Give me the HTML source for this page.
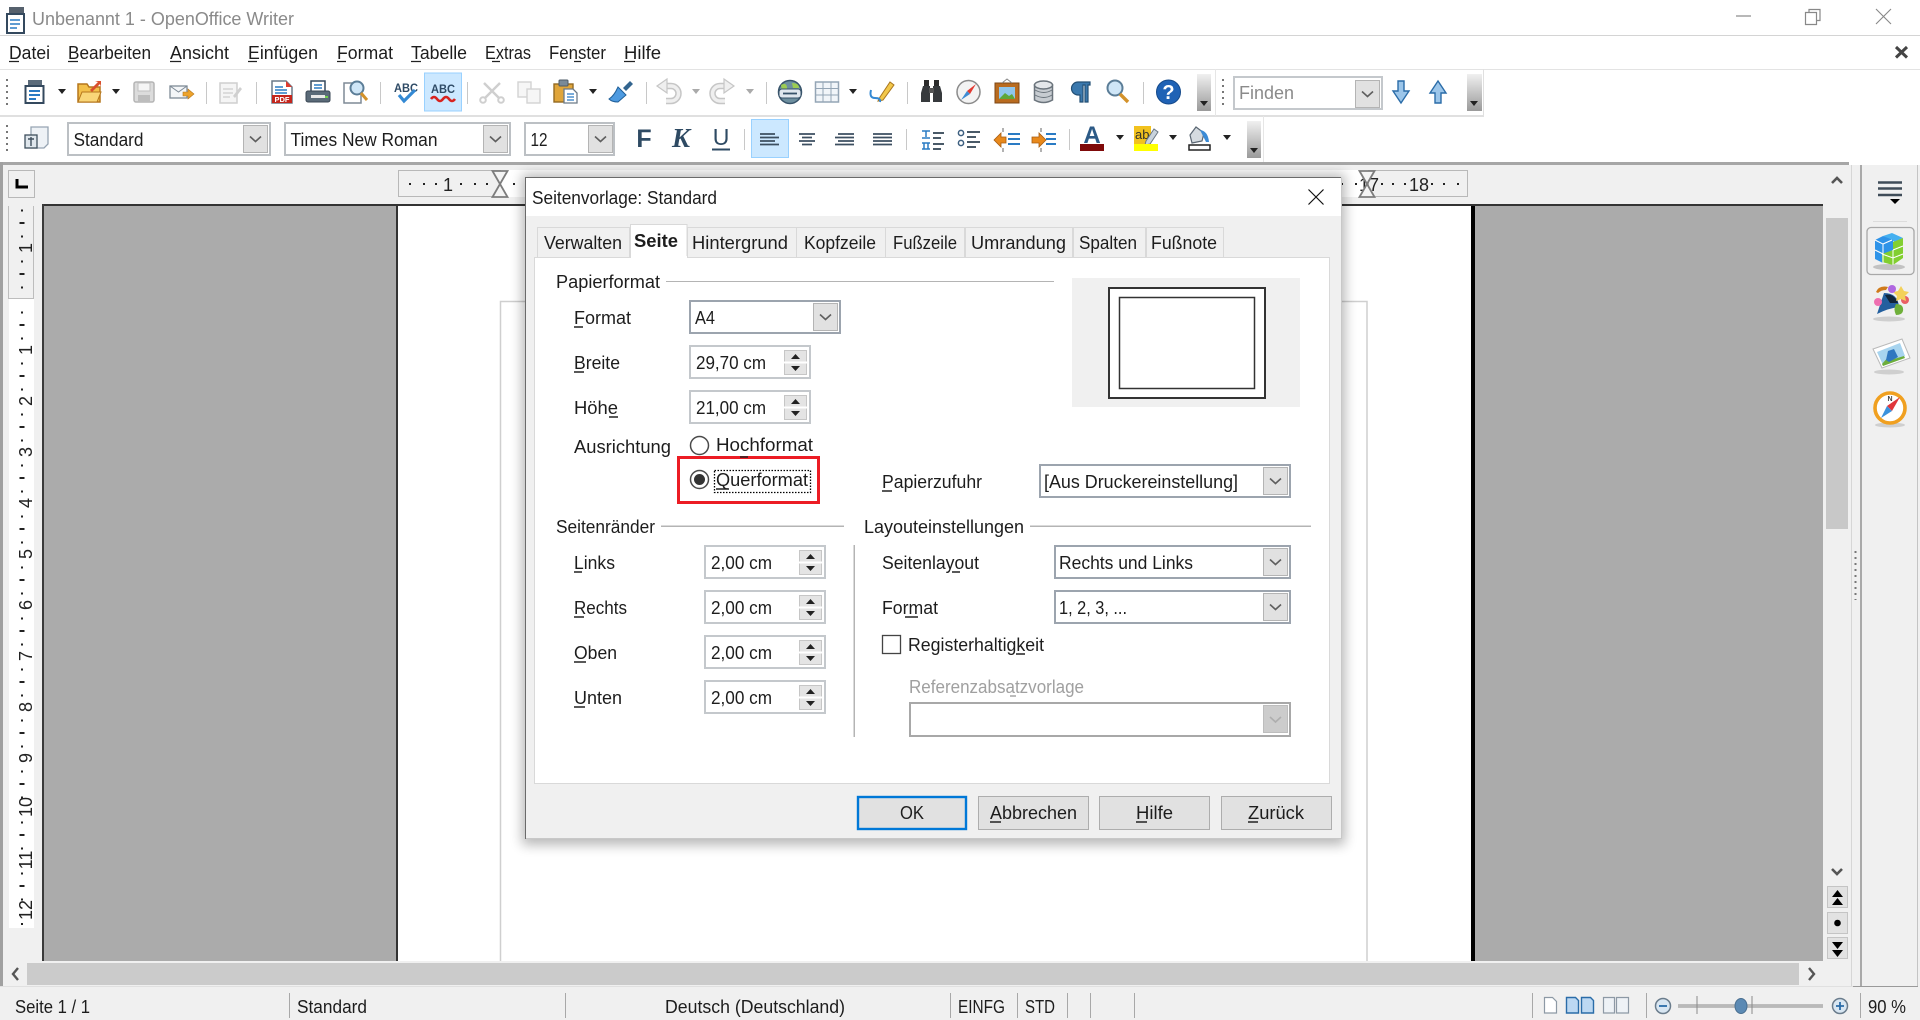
<!DOCTYPE html>
<html lang="de">
<head>
<meta charset="utf-8">
<title>Unbenannt 1 - OpenOffice Writer</title>
<style>
html,body{margin:0;padding:0;background:#fff;width:1920px;height:1020px;overflow:hidden}
svg{display:block;position:absolute;left:0;top:0;filter:blur(.35px)}
text{font-family:"Liberation Sans",sans-serif;font-size:18px;fill:#1d1d1d;white-space:pre}
.g{fill:#8a8a8a}
.d{fill:#a0a0a0}
.r{font-size:18px;fill:#222}
</style>
</head>
<body>
<svg xmlns="http://www.w3.org/2000/svg" width="1920" height="1020" viewBox="0 0 1920 1020">
<defs>
<g id="cb"><rect x=".5" y=".5" width="24" height="27" fill="#e1e1e1" stroke="#b4b4b4"/><path d="M7 11.500l5.500 5 5.500-5" stroke="#5f5f5f" stroke-width="1.600" fill="none"/></g>
<g id="sp"><rect x=".5" y=".5" width="22" height="24" fill="#e4e4e4" stroke="#c6c6c6"/><path d="M0 12.500h23" stroke="#fff" stroke-width="2"/><path d="M7 9l4.500-5 4.500 5z M7 16l4.500 5 4.500-5z" fill="#222"/></g>
<g id="vt"><rect x="21" y="12.500" width="2" height="2" fill="#222"/><rect x="19.500" y="25" width="5" height="2" fill="#222"/><rect x="21" y="38.500" width="2" height="2" fill="#222"/></g>
<path id="ar" d="M-4 0h8l-4 5z" fill="#222"/>
<path id="arg" d="M-4 0h8l-4 5z" fill="#aaa"/>
<g id="grip"><rect x="0" y="0" width="2" height="2" fill="#777"/><rect x="0" y="6" width="2" height="2" fill="#777"/><rect x="0" y="12" width="2" height="2" fill="#777"/><rect x="0" y="18" width="2" height="2" fill="#777"/><rect x="0" y="24" width="2" height="2" fill="#777"/></g>
<linearGradient id="ov" x1="0" y1="0" x2="0" y2="1"><stop offset="0" stop-color="#f0f0f0"/><stop offset="1" stop-color="#9a9a9a"/></linearGradient>
<filter id="sh" x="-5%" y="-5%" width="110%" height="110%"><feGaussianBlur stdDeviation="6"/></filter>
</defs>

<!-- Base -->
<rect width="1920" height="1020" fill="#fff"/>
<rect x="0" y="35" width="1920" height="1" fill="#d4d4d4"/>
<rect x="0" y="69" width="1920" height="1" fill="#e3e3e3"/>
<rect x="0" y="115" width="1484" height="2" fill="#e0e0e0"/>
<rect x="1483" y="69" width="1" height="47" fill="#e0e0e0"/>
<rect x="1215" y="69" width="1" height="47" fill="#e6e6e6"/>
<rect x="1263" y="116" width="1" height="46" fill="#e6e6e6"/>
<rect x="0" y="162" width="1849" height="3" fill="#a6a6a6"/>
<rect x="0" y="165" width="1920" height="855" fill="#f0f0f0"/>
<rect x="0" y="162" width="3" height="825" fill="#a0a0a0"/>

<!-- Title bar -->
<g>
<rect x="9" y="7" width="15" height="8" fill="#56616d"/>
<path d="M7 14h17v19H7z" fill="#fff" stroke="#34495e" stroke-width="2"/>
<path d="M10 20h10M10 24h10M10 28h7" stroke="#2a7bc4" stroke-width="1.600"/>
<text class="g" x="32" y="25" textLength="262" lengthAdjust="spacingAndGlyphs">Unbenannt 1 - OpenOffice Writer</text>
<path d="M1736 16h15" stroke="#888" stroke-width="1.200"/>
<path d="M1805.500 12.500h11v12h-11zM1809 12V9.500h11v11h-3.500" stroke="#888" stroke-width="1.200" fill="none"/>
<path d="M1876 9l15 15M1891 9l-15 15" stroke="#888" stroke-width="1.100"/>
</g>

<!-- Menu -->
<g>
<text x="9" y="59" textLength="41" lengthAdjust="spacingAndGlyphs">Datei</text>
<text x="68" y="59" textLength="83" lengthAdjust="spacingAndGlyphs">Bearbeiten</text>
<text x="170" y="59" textLength="59" lengthAdjust="spacingAndGlyphs">Ansicht</text>
<text x="248" y="59" textLength="70" lengthAdjust="spacingAndGlyphs">Einfügen</text>
<text x="337" y="59" textLength="56" lengthAdjust="spacingAndGlyphs">Format</text>
<text x="411" y="59" textLength="56" lengthAdjust="spacingAndGlyphs">Tabelle</text>
<text x="485" y="59" textLength="46" lengthAdjust="spacingAndGlyphs">Extras</text>
<text x="549" y="59" textLength="57" lengthAdjust="spacingAndGlyphs">Fenster</text>
<text x="624" y="59" textLength="37" lengthAdjust="spacingAndGlyphs">Hilfe</text>
<path d="M9 61.500h10M68 61.500h10M170 61.500h11M248 61.500h9M337 61.500h9M411 61.500h10M492 61.500h8M574 61.500h7M624 61.500h11" stroke="#222" stroke-width="1.300"/>
<path d="M1896 47l11 10.500M1907 47l-11 10.500" stroke="#444" stroke-width="3"/>
</g>

<!-- Toolbar 1 -->
<use href="#grip" x="6" y="79"/>
<g>
<!-- new -->
<rect x="28" y="80" width="14" height="6" fill="#5b6b7a"/>
<path d="M25.500 86h18v17h-18z" fill="#fff" stroke="#34495e" stroke-width="2"/>
<path d="M29 91h11M29 95h11M29 99h7" stroke="#2a7bc4" stroke-width="2"/>
<use href="#ar" x="62" y="89"/>
<!-- open -->
<path d="M78 102V84h9l2 3h11v15z" fill="#f3c04a" stroke="#b5761c" stroke-width="1.500"/>
<path d="M78 102l4-10h19l-4 10z" fill="#f9d678" stroke="#b5761c"/>
<path d="M90 90l8-8-3-1h6v6l-1-3-8 8z" fill="#d9502e"/>
<use href="#ar" x="116" y="89"/>
<!-- save -->
<rect x="134" y="82" width="20" height="20" rx="2" fill="#dcdcdc" stroke="#b5b5b5" stroke-width="1.500"/>
<rect x="138" y="83" width="12" height="8" fill="#f5f5f5" stroke="#c0c0c0"/>
<rect x="138" y="95" width="12" height="7" fill="#bdbdbd"/>
<!-- mail -->
<rect x="170" y="86" width="17" height="12" fill="#f4f6f8" stroke="#7e8a96" stroke-width="1.300"/>
<path d="M170 86l8.500 6 8.500-6" fill="none" stroke="#7e8a96"/>
<path d="M183 92h5v-3l6 5-6 5v-3h-5z" fill="#eda32c" stroke="#b5761c" stroke-width=".6"/>
<rect x="206" y="82" width="1" height="22" fill="#c8c8c8"/>
<!-- edit doc disabled -->
<rect x="220" y="83" width="17" height="20" fill="#f5f5f5" stroke="#cfcfcf" stroke-width="1.500"/>
<path d="M223 89h10M223 93h10M223 97h7" stroke="#d4d4d4" stroke-width="1.500"/>
<path d="M233 96l7-9 2 2-7 9z" fill="#d0d0d0"/>
<rect x="256" y="82" width="1" height="22" fill="#c8c8c8"/>
<!-- pdf -->
<path d="M272 81h14l6 6v16h-20z" fill="#fff" stroke="#6c7a88" stroke-width="1.500"/>
<path d="M286 81l6 6h-6z" fill="#e03b2f"/>
<path d="M275 87h8M275 90h12M275 93h12" stroke="#2a7bc4" stroke-width="1.600"/>
<rect x="272" y="95" width="20" height="8" fill="#c4261d"/>
<text x="282" y="102" text-anchor="middle" style="font-size:7.500px;font-weight:bold;fill:#fff">PDF</text>
<!-- print -->
<rect x="311" y="81" width="14" height="12" fill="#fff" stroke="#34495e" stroke-width="1.500"/>
<path d="M314 85h8M314 88h8" stroke="#2a7bc4" stroke-width="1.500"/>
<rect x="306" y="91" width="24" height="11" rx="2" fill="#5a6a78" stroke="#3a4754"/>
<rect x="311" y="95" width="14" height="3" fill="#e8e8e8"/>
<rect x="325" y="96" width="3" height="2" fill="#6fd04a"/>
<!-- preview -->
<path d="M344 83h12l5 5v15h-17z" fill="#fff" stroke="#7e8a96" stroke-width="1.500"/>
<circle cx="357" cy="88" r="6.500" fill="#cfe6f7" stroke="#5b7d97" stroke-width="2"/>
<path d="M361 93l6 7" stroke="#d3922a" stroke-width="3"/>
<rect x="380" y="82" width="1" height="22" fill="#c8c8c8"/>
<!-- spell -->
<text x="406" y="92" text-anchor="middle" style="font-size:11.500px;font-weight:bold;fill:#2f4b66" textLength="24" lengthAdjust="spacingAndGlyphs">ABC</text>
<path d="M399 95l5 6 11-11" fill="none" stroke="#3389d4" stroke-width="3.200"/>
<!-- autospell -->
<rect x="424.500" y="73" width="37" height="38" fill="#cce8ff" stroke="#99d1ff"/>
<text x="443" y="93" text-anchor="middle" style="font-size:11.500px;font-weight:bold;fill:#2f4b66" textLength="24" lengthAdjust="spacingAndGlyphs">ABC</text>
<path d="M431 99q3-4 6 0t6 0 6 0 6 0" fill="none" stroke="#d8231f" stroke-width="2.600"/>
<rect x="467" y="82" width="1" height="22" fill="#c8c8c8"/>
<!-- cut -->
<path d="M484 83l15 15M500 83l-15 15" stroke="#cfcfcf" stroke-width="2.400"/>
<circle cx="483" cy="100" r="2.800" fill="none" stroke="#cfcfcf" stroke-width="2"/>
<circle cx="501" cy="100" r="2.800" fill="none" stroke="#cfcfcf" stroke-width="2"/>
<!-- copy -->
<rect x="518" y="82" width="13" height="15" fill="#f6f6f6" stroke="#d3d3d3" stroke-width="1.400"/>
<rect x="527" y="89" width="13" height="14" fill="#f6f6f6" stroke="#d3d3d3" stroke-width="1.400"/>
<!-- paste -->
<rect x="554" y="84" width="19" height="18" fill="#e0a53a" stroke="#946a22" stroke-width="1.400"/>
<rect x="559" y="80" width="9" height="6" rx="1" fill="#7a8a98" stroke="#4e5b67"/>
<path d="M564 89h9l4 4v10h-13z" fill="#fff" stroke="#6c7a88" stroke-width="1.300"/>
<path d="M567 94h7M567 97h7M567 100h7" stroke="#2a7bc4" stroke-width="1.300"/>
<use href="#ar" x="593" y="89"/>
<!-- brush -->
<path d="M623 88l7-7 3 3-7 7z" fill="#33658f"/>
<path d="M618 87l8 8-8 7q-6 0-9-3 5-3 9-12z" fill="#4d9ae0" stroke="#1f5f99"/>
<rect x="646" y="82" width="1" height="22" fill="#c8c8c8"/>
<!-- undo / redo -->
<path d="M665 86h6a7.500 7.500 0 0 1 0 15h-5" fill="none" stroke="#c6c6c6" stroke-width="6.500"/>
<path d="M665 86h6a7.500 7.500 0 0 1 0 15h-5" fill="none" stroke="#efefef" stroke-width="3.500"/>
<path d="M667 79l-10 7 10 7z" fill="#efefef" stroke="#c6c6c6" stroke-width="1.200"/>
<use href="#arg" x="696" y="89"/>
<path d="M726 86h-6a7.500 7.500 0 0 0 0 15h5" fill="none" stroke="#c6c6c6" stroke-width="6.500"/>
<path d="M726 86h-6a7.500 7.500 0 0 0 0 15h5" fill="none" stroke="#efefef" stroke-width="3.500"/>
<path d="M724 79l10 7-10 7z" fill="#efefef" stroke="#c6c6c6" stroke-width="1.200"/>
<use href="#arg" x="750" y="89"/>
<rect x="766" y="82" width="1" height="22" fill="#c8c8c8"/>
<!-- globe -->
<circle cx="790" cy="92" r="11.500" fill="#6d8f9f" stroke="#37536a" stroke-width="1.500"/>
<path d="M781 85q5-3 6 2t-5 4zM792 83q7 0 7 5l-6 0z" fill="#9ccc52"/>
<rect x="779" y="89" width="22" height="9" rx="3" fill="#dfe7ee" stroke="#37536a"/>
<path d="M783 93.500h14" stroke="#37536a" stroke-width="1.800"/>
<!-- table -->
<rect x="815.500" y="82" width="23" height="20" fill="#f1f5f9" stroke="#94a5b5" stroke-width="1.500"/>
<path d="M815 88.500h24M815 95h24M823 82v20M831 82v20" stroke="#94a5b5"/>
<use href="#ar" x="853" y="89"/>
<!-- pencil -->
<path d="M880 97l10-15 4 3-11 15-5 1z" fill="#f2c74a" stroke="#a9761f"/>
<path d="M871 90q-2 8 4 8t5 4" fill="none" stroke="#3389d4" stroke-width="2"/>
<rect x="907" y="82" width="1" height="22" fill="#c8c8c8"/>
<!-- binoculars -->
<rect x="924" y="80" width="5" height="7" fill="#2b2b2b"/><rect x="934" y="80" width="5" height="7" fill="#2b2b2b"/>
<path d="M923 86h7v16h-9v-9zM933 86h7l2 7v9h-9z" fill="#36393c"/>
<rect x="929" y="88" width="5" height="5" fill="#555"/>
<!-- compass -->
<circle cx="968.500" cy="92" r="11.500" fill="#f3f3f3" stroke="#8b8b8b" stroke-width="1.500"/>
<path d="M976 84l-6 10-3-3z" fill="#e23a32"/>
<path d="M961 100l9-6-3-3z" fill="#3f8bd2"/>
<!-- picture -->
<rect x="995" y="83" width="24" height="20" fill="#b96b1f" stroke="#7d4714"/>
<rect x="999" y="87" width="16" height="12" fill="#8fc6ec"/>
<path d="M999 99l6-6 4 3 3-2 3 5z" fill="#5ea63a"/>
<path d="M1002 83l5-4 5 4" fill="none" stroke="#888"/>
<!-- db -->
<path d="M1034.500 85v15q9 5 18 0V85z" fill="#c7ccd1" stroke="#6b747c" stroke-width="1.500"/>
<ellipse cx="1043.500" cy="85" rx="9" ry="4" fill="#e4e7ea" stroke="#6b747c" stroke-width="1.500"/>
<path d="M1035 90q9 5 17 0M1035 95q9 5 17 0" fill="none" stroke="#6b747c"/>
<!-- pilcrow -->
<path d="M1090 82h-12a6.500 6.500 0 0 0 0 13h2v7h3V85h2v17h3V85h2z" fill="#3a78ad" stroke="#234f75" stroke-width="1.200"/>
<!-- find -->
<circle cx="1115" cy="88" r="7.500" fill="#cfe6f7" stroke="#5b7d97" stroke-width="2"/>
<path d="M1120 94l8 8" stroke="#d3922a" stroke-width="3.400"/>
<rect x="1143" y="82" width="1" height="22" fill="#c8c8c8"/>
<!-- help -->
<circle cx="1168.500" cy="92" r="12" fill="#1f62b5" stroke="#154a8b"/>
<text x="1168.500" y="99" text-anchor="middle" style="font-size:20px;font-weight:bold;fill:#fff">?</text>
<!-- overflow -->
<rect x="1197" y="74" width="14" height="37" fill="url(#ov)"/><use href="#ar" x="1204" y="101"/>
<use href="#grip" x="1222" y="79"/>
<!-- find field -->
<rect x="1234" y="77" width="148" height="32" fill="#fff" stroke="#c4c8cc" stroke-width="2"/>
<text class="g" x="1239" y="99" textLength="55" lengthAdjust="spacingAndGlyphs">Finden</text>
<use href="#cb" x="1355" y="80"/>
<path d="M1398 81h6v10h5l-8 12-8-12h5z" fill="#9cc6ea" stroke="#2a6ca8" stroke-width="1.400"/>
<path d="M1435 103h6V93h5l-8-12-8 12h5z" fill="#9cc6ea" stroke="#2a6ca8" stroke-width="1.400"/>
<rect x="1467" y="74" width="15" height="37" fill="url(#ov)"/><use href="#ar" x="1474" y="101"/>
</g>

<!-- Toolbar 2 -->
<use href="#grip" x="6" y="125"/>
<g>
<path d="M31 127h17v17l-4 4H31z" fill="#eef2f6" stroke="#96a4b2" stroke-width="1.300"/>
<rect x="25" y="135" width="12" height="13" fill="#dfe6ec" stroke="#3f4f5d" stroke-width="1.300"/>
<path d="M31 137v9M28 139h6" stroke="#3f4f5d" stroke-width="1.400"/>
<rect x="68" y="123" width="202" height="32" fill="#fff" stroke="#bcc0c4" stroke-width="2"/>
<text x="73.500" y="146" textLength="70" lengthAdjust="spacingAndGlyphs">Standard</text>
<use href="#cb" x="243" y="125"/>
<rect x="285" y="123" width="225" height="32" fill="#fff" stroke="#bcc0c4" stroke-width="2"/>
<text x="290.500" y="146" textLength="147" lengthAdjust="spacingAndGlyphs">Times New Roman</text>
<use href="#cb" x="483" y="125"/>
<rect x="525" y="123" width="89" height="32" fill="#fff" stroke="#bcc0c4" stroke-width="2"/>
<text x="530.500" y="146" textLength="17" lengthAdjust="spacingAndGlyphs">12</text>
<use href="#cb" x="588" y="125"/>
<text x="644" y="147" text-anchor="middle" style="font-size:25px;font-weight:bold;fill:#2e4a63">F</text>
<text x="681" y="147" text-anchor="middle" style="font-family:'Liberation Serif',serif;font-size:27px;font-weight:bold;font-style:italic;fill:#2e4a63">K</text>
<text x="721" y="145" text-anchor="middle" style="font-size:23px;fill:#2e4a63">U</text>
<path d="M712 149.500h18" stroke="#2e4a63" stroke-width="2"/>
<rect x="744" y="129" width="1" height="21" fill="#c8c8c8"/>
<rect x="751.500" y="119.500" width="37" height="38" fill="#cce8ff" stroke="#99d1ff"/>
<path d="M760 134h15M760 137.500h19M760 141h15M760 144.500h19" stroke="#3c4f60" stroke-width="1.800"/>
<path d="M799 134h16M802 137.500h10M799 141h16M802 144.500h10" stroke="#3c4f60" stroke-width="1.800"/>
<path d="M838 134h16M835 137.500h19M838 141h16M835 144.500h19" stroke="#3c4f60" stroke-width="1.800"/>
<path d="M873 134h19M873 137.500h19M873 141h19M873 144.500h19" stroke="#3c4f60" stroke-width="1.800"/>
<rect x="906" y="129" width="1" height="21" fill="#c8c8c8"/>
<path d="M922 131h8M922 138h8M926 131v6M922 143h8M922 149h8M924 143v6M928 143v6" stroke="#2a7bc4" stroke-width="1.500"/>
<path d="M933 133h11M933 138h8M933 144h11M933 149h8" stroke="#4a5a68" stroke-width="2"/>
<circle cx="961" cy="133" r="2.600" fill="none" stroke="#3d5f80" stroke-width="1.500"/><circle cx="961" cy="143" r="2.600" fill="none" stroke="#3d5f80" stroke-width="1.500"/>
<path d="M967 132h13M967 137h9M967 142h13M967 147h9" stroke="#4a5a68" stroke-width="2"/>
<path d="M994 140l7-7v4h5v6h-5v4z" fill="#e8891c" stroke="#a85c10" stroke-width=".8"/>
<path d="M1008 134h12M1008 139h12M1008 144h12" stroke="#2a7bc4" stroke-width="2"/><path d="M1003 128v4M1003 148v4" stroke="#666"/>
<path d="M1046 140l-7-7v4h-7v6h7v4z" fill="#e8891c" stroke="#a85c10" stroke-width=".8"/>
<path d="M1046 134h10M1046 139h10M1046 144h10" stroke="#2a7bc4" stroke-width="2"/><path d="M1041 128v4M1041 148v4" stroke="#666"/>
<rect x="1069" y="129" width="1" height="21" fill="#c8c8c8"/>
<text x="1092" y="143" text-anchor="middle" style="font-size:24px;font-weight:bold;fill:#2c5a86">A</text>
<rect x="1080" y="144" width="24" height="7" fill="#7f0a0a"/>
<use href="#ar" x="1120" y="135"/>
<rect x="1134" y="126" width="17" height="18" fill="#f2c21e"/>
<text x="1135" y="139" style="font-size:13px;fill:#33322a">ab</text>
<path d="M1146 141l8-12 4 3-8 12-5 1z" fill="#c9d3dc" stroke="#6a7784"/>
<rect x="1134" y="144" width="24" height="7" fill="#ffff00"/>
<use href="#ar" x="1173" y="135"/>
<rect x="1189" y="145" width="21" height="5" fill="#fff" stroke="#222" stroke-width="1.500"/>
<path d="M1192 143l-2-8 6-8 8 6-2 8z" fill="#d5dbe0" stroke="#5a6672" stroke-width="1.200"/>
<path d="M1200 130q8 1 9 12l-3 0z" fill="#3b8bd6"/>
<use href="#ar" x="1227" y="135"/>
<rect x="1247" y="121" width="14" height="37" fill="url(#ov)"/><use href="#ar" x="1254" y="148"/>
</g>

<!-- Left ruler + corner -->
<rect x="8.500" y="170.500" width="26" height="27" fill="#f0f0f0" stroke="#b8b8b8"/>
<path d="M17 179v8h11" fill="none" stroke="#000" stroke-width="3"/>
<rect x="9" y="206" width="25" height="722" fill="#fff"/>
<path d="M8.500 206v92.500h25V206" fill="#f0f0f0" stroke="#bdbdbd"/>
<use href="#vt" x="0" y="197"/><use href="#vt" x="0" y="248"/>
<use href="#vt" x="0" y="299"/><use href="#vt" x="0" y="350"/><use href="#vt" x="0" y="401"/><use href="#vt" x="0" y="452"/><use href="#vt" x="0" y="503"/><use href="#vt" x="0" y="554"/><use href="#vt" x="0" y="605"/><use href="#vt" x="0" y="656"/><use href="#vt" x="0" y="707"/><use href="#vt" x="0" y="758"/><use href="#vt" x="0" y="809"/><use href="#vt" x="0" y="860"/>
<rect x="21" y="923" width="2" height="2" fill="#222"/>
<g text-anchor="middle">
<text class="r" transform="translate(32,248) rotate(-90)">1</text>
<text class="r" transform="translate(32,350) rotate(-90)">1</text>
<text class="r" transform="translate(32,401) rotate(-90)">2</text>
<text class="r" transform="translate(32,452) rotate(-90)">3</text>
<text class="r" transform="translate(32,503) rotate(-90)">4</text>
<text class="r" transform="translate(32,554) rotate(-90)">5</text>
<text class="r" transform="translate(32,605) rotate(-90)">6</text>
<text class="r" transform="translate(32,656) rotate(-90)">7</text>
<text class="r" transform="translate(32,707) rotate(-90)">8</text>
<text class="r" transform="translate(32,758) rotate(-90)">9</text>
<text class="r" transform="translate(32,807) rotate(-90)">10</text>
<text class="r" transform="translate(32,860) rotate(-90)">11</text>
<text class="r" transform="translate(32,910) rotate(-90)">12</text>
</g>

<!-- Horizontal ruler -->
<rect x="398" y="170" width="970" height="27" fill="#fff"/>
<rect x="398.500" y="170.500" width="102" height="26" fill="#f0f0f0" stroke="#b8b8b8"/>
<rect x="1368.500" y="170.500" width="99" height="26" fill="#f0f0f0" stroke="#b8b8b8"/>
<path d="M409 184h2M423 184h2M435 184h2M460 184h2M474 184h2M486 184h2M513 184h2M1355 184h2M1381 184h2M1392 184h2M1404 184h2M1431 184h2M1443 184h2M1457 184h2M1341 184h2" stroke="#222" stroke-width="2"/>
<text class="r" x="448" y="191" text-anchor="middle">1</text>
<text class="r" x="1369" y="191" text-anchor="middle">17</text>
<text class="r" x="1419" y="191" text-anchor="middle">18</text>
<path d="M492.500 171h15l-7.500 13 7.500 13h-15l7.500-13z" fill="#f4f4f4" stroke="#7d7d7d" stroke-width="1.800"/>
<path d="M1359.500 171h15l-7.500 13 7.500 13h-15l7.500-13z" fill="#f4f4f4" stroke="#7d7d7d" stroke-width="1.800"/>

<!-- Document area -->
<rect x="42" y="204" width="1781" height="757" fill="#ababab"/>
<rect x="42" y="204" width="1782" height="2" fill="#333"/>
<rect x="42" y="204" width="2" height="757" fill="#3a3a3a"/>
<rect x="398" y="206" width="1073" height="755" fill="#fff"/>
<rect x="396" y="206" width="2" height="755" fill="#333"/>
<rect x="1471" y="206" width="4" height="755" fill="#000"/>
<path d="M500.500 961V301.500h866.500V961" fill="none" stroke="#cfcfcf" stroke-width="1.500"/>

<!-- Scrollbars -->
<rect x="1823" y="165" width="28" height="798" fill="#f0f0f0"/>
<rect x="1826" y="218" width="22" height="311" fill="#c8c8c8"/>
<path d="M1832 183l5-5 5 5" fill="none" stroke="#555" stroke-width="2.600"/>
<path d="M1832 869l5 5 5-5" fill="none" stroke="#555" stroke-width="2.600"/>
<g fill="#e2e2e2" stroke="#c4c4c4">
<rect x="1827.500" y="886.500" width="20" height="21"/><rect x="1827.500" y="912.500" width="20" height="21"/><rect x="1827.500" y="937.500" width="20" height="21"/>
</g>
<path d="M1832 897l5.500-7 5.500 7zM1832 905l5.500-7 5.500 7z" fill="#000"/>
<circle cx="1837.500" cy="923" r="3.300" fill="#000"/>
<path d="M1832 942h11l-5.500 7zM1832 950h11l-5.500 7z" fill="#000"/>
<rect x="27" y="963" width="1772" height="22" fill="#cbcbcb"/>
<path d="M18 968l-5 6 5 6" fill="none" stroke="#555" stroke-width="2.400"/>
<path d="M1809 968l5 6-5 6" fill="none" stroke="#555" stroke-width="2.400"/>

<!-- Right edge + sidebar -->
<rect x="1851" y="165" width="1" height="822" fill="#d6d6d6"/>
<rect x="1860" y="165" width="2" height="822" fill="#a9a9a9"/>
<rect x="1917" y="165" width="1" height="822" fill="#c4c4c4"/>
<rect x="1853" y="986" width="65" height="1" fill="#9a9a9a"/>
<path d="M1855.500 551v49" stroke="#777" stroke-width="2" stroke-dasharray="2 4"/>
<path d="M1878 182.500h24M1878 188.500h24M1878 195h24" stroke="#3f4c58" stroke-width="2.500"/>
<path d="M1890 199h10l-5 5z" fill="#000"/>
<rect x="1873" y="221" width="34" height="1" fill="#dcdcdc"/>
<rect x="1867" y="227.500" width="47" height="47" rx="4" fill="#f0f0f0" stroke="#a8a8a8" stroke-width="1.300"/>
<ellipse cx="1889" cy="267" rx="16" ry="3" fill="#c2c2c2"/>
<path d="M1883 236l9-3 11 5-8 4z" fill="#45b0f0"/>
<path d="M1875 240l8-4 10 4v10l-4 2v8l-6 3-8-4z" fill="#2e93e8"/>
<path d="M1893 242l10-4v20l-10 7-11-3v-8l11-4z" fill="#82cf30"/>
<path d="M1875 240l8 4v19M1883 244l9-4M1875 250l8 4M1893 250v15M1893 250l10-4M1882 254l11 4 10-4" fill="none" stroke="#fff" stroke-width="1"/>
<ellipse cx="1889" cy="319" rx="16" ry="2.500" fill="#cfcfcf"/>
<path d="M1877 314l7-21q14 0 15 14-10 1-22 7z" fill="#235f9e"/>
<path d="M1885 295q9-2 13 8l-8 0z" fill="#12263a"/>
<path d="M1896 304q8 0 7 7-1 4-7 4-3-6 0-11z" fill="#6fb03a"/>
<path d="M1876 292q3-7 12-5l-2 3q-5 0-8 3z" fill="#cf7a1a"/>
<circle cx="1878" cy="302" r="4" fill="#ee6fb0"/><circle cx="1905" cy="300" r="4" fill="#ea5f66"/>
<path d="M1901 286l3 5 5 1-4 4 1 5-5-2-5 2 1-5-4-4 5-1z" fill="#f3d15a"/><circle cx="1892" cy="289" r="4" fill="#b067e0"/>
<ellipse cx="1889" cy="372" rx="15" ry="2.500" fill="#cfcfcf"/>
<path d="M1873 349l29-10 8 19-28 10z" fill="#fff" stroke="#b9b9b9"/>
<path d="M1877 352l23-9 5 13-22 9z" fill="#a7d4ef"/>
<path d="M1882 364l8-9 4 4 10-3 1 2-22 8z" fill="#6dad3c"/>
<path d="M1886 360l2-9 6-2 4 8-9 5z" fill="#2f77c0"/>
<ellipse cx="1890" cy="425" rx="15" ry="2.500" fill="#cfcfcf"/>
<circle cx="1890" cy="408" r="15" fill="#fff" stroke="#f0a020" stroke-width="3.600"/>
<path d="M1900 397l-8 14-5-5z" fill="#e0363a"/>
<path d="M1881 418l11-7-5-5z" fill="#3a92dd"/>
<text x="1890" y="401" text-anchor="middle" style="font-size:7px;font-weight:bold;fill:#444">N</text>

<!-- Status bar -->
<rect x="0" y="986" width="1853" height="1" fill="#e0e0e0"/>
<g fill="#a8a8a8">
<rect x="289" y="993" width="1" height="25"/><rect x="565" y="993" width="1" height="25"/><rect x="950" y="993" width="1" height="25"/><rect x="1017" y="993" width="1" height="25"/><rect x="1067" y="993" width="1" height="25"/><rect x="1090" y="993" width="1" height="25"/><rect x="1134" y="993" width="1" height="25"/><rect x="1532" y="993" width="1" height="25"/><rect x="1646" y="993" width="1" height="25"/><rect x="1860" y="993" width="1" height="25"/>
</g>
<text x="15" y="1013" textLength="75" lengthAdjust="spacingAndGlyphs">Seite 1 / 1</text>
<text x="297" y="1013" textLength="70" lengthAdjust="spacingAndGlyphs">Standard</text>
<text x="665" y="1013" textLength="180" lengthAdjust="spacingAndGlyphs">Deutsch (Deutschland)</text>
<text x="958" y="1013" textLength="47" lengthAdjust="spacingAndGlyphs">EINFG</text>
<text x="1025" y="1013" textLength="30" lengthAdjust="spacingAndGlyphs">STD</text>
<text x="1868" y="1013" textLength="38" lengthAdjust="spacingAndGlyphs">90 %</text>
<path d="M1544.500 997.500h8l4 4v11.500h-12z" fill="#fff" stroke="#8d99a5" stroke-width="1.200"/>
<path d="M1566.500 997.500h9l3 3v12.500h-12zM1581.500 997.500h9l3 3v12.500h-12z" fill="#bcd8f2" stroke="#2a6ca8" stroke-width="1.400"/>
<path d="M1603.500 997.500h11v15.500h-11zM1616.500 997.500h12v15.500h-12z" fill="#eef2f6" stroke="#8d99a5" stroke-width="1.200"/>
<circle cx="1663" cy="1006" r="7.500" fill="#d8e6f2" stroke="#6a7c8c" stroke-width="1.500"/><path d="M1659 1006h8" stroke="#2a6ca8" stroke-width="1.800"/>
<path d="M1678 1006h145" stroke="#8a8a8a" stroke-width="3"/><path d="M1678 1006h145" stroke="#e8e8e8" stroke-width="1"/>
<path d="M1697 996v18M1752 996v18" stroke="#8a8a8a"/>
<ellipse cx="1741" cy="1006" rx="6" ry="7.500" fill="#5c8ab4" stroke="#4a6f90"/>
<circle cx="1840" cy="1006" r="7.500" fill="#d8e6f2" stroke="#6a7c8c" stroke-width="1.500"/><path d="M1836 1006h8M1840 1002v8" stroke="#2a6ca8" stroke-width="1.800"/>

<!-- Dialog shadow -->
<rect x="522" y="174" width="823" height="671" fill="#000" opacity=".28" filter="url(#sh)"/>

<!-- Dialog -->
<rect x="525" y="177" width="816" height="662" fill="#f0f0f0"/>
<path d="M525.500 839V177.500H1341" fill="none" stroke="#6a6a6a"/>
<path d="M1341.500 177.500V838.500H526" fill="none" stroke="#c8c8c8"/>
<rect x="526" y="178" width="815" height="38" fill="#fff"/>
<text x="532" y="204" textLength="185" lengthAdjust="spacingAndGlyphs">Seitenvorlage: Standard</text>
<path d="M1308.500 189.500l15 15M1323.500 189.500l-15 15" stroke="#111" stroke-width="1.200"/>

<!-- Tabs -->
<g fill="#f0f0f0" stroke="#d9d9d9">
<rect x="537.500" y="227.500" width="92" height="30"/>
<rect x="687.500" y="227.500" width="109" height="30"/>
<rect x="796.500" y="227.500" width="89" height="30"/>
<rect x="885.500" y="227.500" width="79" height="30"/>
<rect x="965.500" y="227.500" width="107" height="30"/>
<rect x="1073.500" y="227.500" width="72" height="30"/>
<rect x="1146.500" y="227.500" width="77" height="30"/>
</g>
<rect x="534.500" y="257.500" width="795" height="526" fill="#fff" stroke="#d9d9d9"/>
<path d="M630.500 258v-33.500h56.500V258" fill="#fff" stroke="#d9d9d9"/>
<rect x="631" y="256" width="56" height="3" fill="#fff"/>
<text x="544" y="249" textLength="78" lengthAdjust="spacingAndGlyphs">Verwalten</text>
<text x="634" y="247" textLength="44" lengthAdjust="spacingAndGlyphs" style="font-weight:bold">Seite</text>
<text x="692" y="249" textLength="96" lengthAdjust="spacingAndGlyphs">Hintergrund</text>
<text x="804" y="249" textLength="72" lengthAdjust="spacingAndGlyphs">Kopfzeile</text>
<text x="893" y="249" textLength="64" lengthAdjust="spacingAndGlyphs">Fußzeile</text>
<text x="971" y="249" textLength="95" lengthAdjust="spacingAndGlyphs">Umrandung</text>
<text x="1079" y="249" textLength="58" lengthAdjust="spacingAndGlyphs">Spalten</text>
<text x="1151" y="249" textLength="66" lengthAdjust="spacingAndGlyphs">Fußnote</text>

<!-- Group headers -->
<text x="556" y="288" textLength="104" lengthAdjust="spacingAndGlyphs">Papierformat</text>
<rect x="666" y="281" width="388" height="1" fill="#b4b4b4"/>
<text x="556" y="533" textLength="99" lengthAdjust="spacingAndGlyphs">Seitenränder</text>
<rect x="661" y="525.500" width="183" height="1.500" fill="#b4b4b4"/>
<text x="864" y="533" textLength="160" lengthAdjust="spacingAndGlyphs">Layouteinstellungen</text>
<rect x="1030" y="525.500" width="281" height="1.500" fill="#b4b4b4"/>
<rect x="853.500" y="545" width="1.500" height="192" fill="#b4b4b4"/>

<!-- Papierformat -->
<text x="574" y="324" textLength="57" lengthAdjust="spacingAndGlyphs">Format</text>
<rect x="690" y="301" width="150" height="32" fill="#fff" stroke="#9ca4ae" stroke-width="2"/>
<text x="695" y="324" textLength="20" lengthAdjust="spacingAndGlyphs">A4</text>
<use href="#cb" x="813" y="303"/>
<text x="574" y="369" textLength="46" lengthAdjust="spacingAndGlyphs">Breite</text>
<rect x="690" y="346" width="120" height="32" fill="#fff" stroke="#c4c8cc" stroke-width="2"/>
<text x="696" y="369" textLength="70" lengthAdjust="spacingAndGlyphs">29,70 cm</text>
<use href="#sp" x="784" y="350"/>
<text x="574" y="414" textLength="44" lengthAdjust="spacingAndGlyphs">Höhe</text>
<rect x="690" y="391" width="120" height="32" fill="#fff" stroke="#c4c8cc" stroke-width="2"/>
<text x="696" y="414" textLength="70" lengthAdjust="spacingAndGlyphs">21,00 cm</text>
<use href="#sp" x="784" y="395"/>
<text x="574" y="453" textLength="97" lengthAdjust="spacingAndGlyphs">Ausrichtung</text>
<circle cx="699.500" cy="445.500" r="9" fill="#fff" stroke="#4a4a4a" stroke-width="1.500"/>
<text x="716" y="451" textLength="97" lengthAdjust="spacingAndGlyphs">Hochformat</text>
<circle cx="699.500" cy="479.500" r="9" fill="#fff" stroke="#4a4a4a" stroke-width="1.500"/>
<circle cx="699.500" cy="479.500" r="5.500" fill="#333"/>
<text x="716" y="486" textLength="92" lengthAdjust="spacingAndGlyphs">Querformat</text>
<rect x="714.500" y="470.500" width="96" height="22" fill="none" stroke="#000" stroke-width="1.300" stroke-dasharray="1.500 1.500"/>
<rect x="678.500" y="457.500" width="140" height="45" fill="none" stroke="#ec1c24" stroke-width="3"/>
<text x="882" y="488" textLength="100" lengthAdjust="spacingAndGlyphs">Papierzufuhr</text>
<rect x="1040" y="465" width="250" height="32" fill="#fff" stroke="#9ca4ae" stroke-width="2"/>
<text x="1044" y="488" textLength="194" lengthAdjust="spacingAndGlyphs">[Aus Druckereinstellung]</text>
<use href="#cb" x="1263" y="467"/>

<!-- Preview -->
<rect x="1072" y="278" width="228" height="129" fill="#f0f0f0"/>
<rect x="1109" y="288" width="156" height="110" fill="#fff" stroke="#333" stroke-width="2"/>
<rect x="1119.500" y="297.500" width="135" height="91" fill="#fff" stroke="#333" stroke-width="1.500"/>

<!-- Margins -->
<text x="574" y="569" textLength="41" lengthAdjust="spacingAndGlyphs">Links</text>
<rect x="705" y="546" width="120" height="32" fill="#fff" stroke="#c4c8cc" stroke-width="2"/>
<text x="711" y="569" textLength="61" lengthAdjust="spacingAndGlyphs">2,00 cm</text>
<use href="#sp" x="799" y="550"/>
<text x="574" y="614" textLength="53" lengthAdjust="spacingAndGlyphs">Rechts</text>
<rect x="705" y="591" width="120" height="32" fill="#fff" stroke="#c4c8cc" stroke-width="2"/>
<text x="711" y="614" textLength="61" lengthAdjust="spacingAndGlyphs">2,00 cm</text>
<use href="#sp" x="799" y="595"/>
<text x="574" y="659" textLength="43" lengthAdjust="spacingAndGlyphs">Oben</text>
<rect x="705" y="636" width="120" height="32" fill="#fff" stroke="#c4c8cc" stroke-width="2"/>
<text x="711" y="659" textLength="61" lengthAdjust="spacingAndGlyphs">2,00 cm</text>
<use href="#sp" x="799" y="640"/>
<text x="574" y="704" textLength="48" lengthAdjust="spacingAndGlyphs">Unten</text>
<rect x="705" y="681" width="120" height="32" fill="#fff" stroke="#c4c8cc" stroke-width="2"/>
<text x="711" y="704" textLength="61" lengthAdjust="spacingAndGlyphs">2,00 cm</text>
<use href="#sp" x="799" y="685"/>

<!-- Layout -->
<text x="882" y="569" textLength="97" lengthAdjust="spacingAndGlyphs">Seitenlayout</text>
<rect x="1055" y="546" width="235" height="32" fill="#fff" stroke="#9ca4ae" stroke-width="2"/>
<text x="1059" y="569" textLength="134" lengthAdjust="spacingAndGlyphs">Rechts und Links</text>
<use href="#cb" x="1263" y="548"/>
<text x="882" y="614" textLength="56" lengthAdjust="spacingAndGlyphs">Format</text>
<rect x="1055" y="591" width="235" height="32" fill="#fff" stroke="#9ca4ae" stroke-width="2"/>
<text x="1059" y="614" textLength="68" lengthAdjust="spacingAndGlyphs">1, 2, 3, ...</text>
<use href="#cb" x="1263" y="593"/>
<rect x="882.500" y="635.500" width="18" height="18" fill="#fff" stroke="#444" stroke-width="1.300"/>
<text x="908" y="651" textLength="136" lengthAdjust="spacingAndGlyphs">Registerhaltigkeit</text>
<text class="d" x="909" y="693" textLength="175" lengthAdjust="spacingAndGlyphs">Referenzabsatzvorlage</text>
<rect x="910" y="703" width="380" height="33" fill="#fff" stroke="#a8a8a8" stroke-width="2"/>
<rect x="1263.500" y="705.500" width="24" height="27" fill="#cccccc" stroke="#bdbdbd"/>
<path d="M1270 717l5.500 5 5.500-5" stroke="#aeaeae" stroke-width="1.600" fill="none"/>

<!-- Mnemonic underlines -->
<path d="M574 327h9M574 372h10M609 417h9M740 457h8M716 489h13M882 491h10M574 572h8M574 617h10M574 662h12M574 707h11M952 572h8M905 617h13M1016 654h9" stroke="#222" stroke-width="1.400"/>
<path d="M1010 696h6" stroke="#a0a0a0" stroke-width="1.400"/>

<!-- Buttons -->
<rect x="858" y="797" width="108" height="32" fill="#e1e1e1" stroke="#0078d7" stroke-width="2.400"/>
<text x="900" y="819" textLength="24" lengthAdjust="spacingAndGlyphs">OK</text>
<rect x="978.500" y="796.500" width="110" height="33" fill="#e1e1e1" stroke="#adadad"/>
<text x="990" y="819" textLength="87" lengthAdjust="spacingAndGlyphs">Abbrechen</text>
<rect x="1099.500" y="796.500" width="110" height="33" fill="#e1e1e1" stroke="#adadad"/>
<text x="1136" y="819" textLength="37" lengthAdjust="spacingAndGlyphs">Hilfe</text>
<rect x="1221.500" y="796.500" width="110" height="33" fill="#e1e1e1" stroke="#adadad"/>
<text x="1248" y="819" textLength="56" lengthAdjust="spacingAndGlyphs">Zurück</text>
<path d="M990 822h11M1136 822h11M1248 822h10" stroke="#222" stroke-width="1.400"/>
</svg>
</body>
</html>
